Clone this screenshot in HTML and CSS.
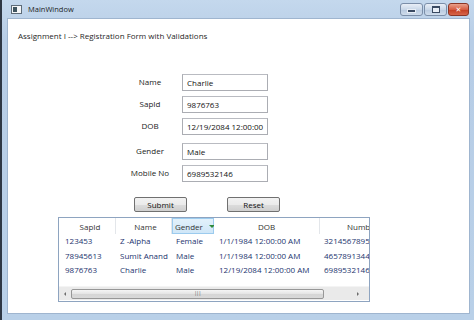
FILE: index.html
```html
<!DOCTYPE html>
<html lang="en">
<head>
    <meta charset="UTF-8">
    <title>MainWindow</title>
    <link rel="stylesheet" href="styles.css">
</head>
<body>
    <div class="window">
        <div class="titlebar">
            <svg class="app-icon" width="11" height="9" viewBox="0 0 11 9">
                <rect x="0.5" y="0.5" width="10" height="8" fill="#f4f6f8" stroke="#5d6b78"/>
                <rect x="2" y="2" width="4" height="5" fill="#3f5560"/>
            </svg>
            <span class="title">MainWindow</span>
            <div class="caption-buttons">
                <div class="cap-btn"><span class="min-glyph"></span></div>
                <div class="cap-btn"><span class="max-glyph"></span></div>
                <div class="cap-btn close"><span class="close-glyph">&#x2715;</span></div>
            </div>
        </div>

        <div class="client">
            <p class="heading">Assignment I --&gt; Registration Form with Validations</p>

            <div class="form">
                <div class="field">
                    <label>Name</label>
                    <div class="textbox">Charlie</div>
                </div>
                <div class="field">
                    <label>SapId</label>
                    <div class="textbox">9876763</div>
                </div>
                <div class="field">
                    <label>DOB</label>
                    <div class="textbox">12/19/2084 12:00:00</div>
                </div>
                <div class="field gap-above">
                    <label>Gender</label>
                    <div class="textbox">Male</div>
                </div>
                <div class="field">
                    <label>Mobile No</label>
                    <div class="textbox">6989532146</div>
                </div>
            </div>

            <div class="actions">
                <button>Submit</button>
                <button>Reset</button>
            </div>

            <div class="grid">
                <div class="grid-head">
                    <div class="hcell c-sap">SapId</div>
                    <div class="hcell c-name">Name</div>
                    <div class="hcell c-gender sorted">Gender <span class="sort-arrow"></span></div>
                    <div class="hcell c-dob">DOB</div>
                    <div class="hcell c-num">Numb</div>
                </div>
                <div class="grid-body">
                    <div class="grid-row">
                        <div class="cell c-sap">123453</div>
                        <div class="cell c-name">Z -Alpha</div>
                        <div class="cell c-gender">Female</div>
                        <div class="cell c-dob">1/1/1984 12:00:00 AM</div>
                        <div class="cell c-num">3214567895</div>
                    </div>
                    <div class="grid-row">
                        <div class="cell c-sap">78945613</div>
                        <div class="cell c-name">Sumit Anand</div>
                        <div class="cell c-gender">Male</div>
                        <div class="cell c-dob">1/1/1984 12:00:00 AM</div>
                        <div class="cell c-num">4657891344</div>
                    </div>
                    <div class="grid-row">
                        <div class="cell c-sap">9876763</div>
                        <div class="cell c-name">Charlie</div>
                        <div class="cell c-gender">Male</div>
                        <div class="cell c-dob">12/19/2084 12:00:00 AM</div>
                        <div class="cell c-num">6989532146</div>
                    </div>
                </div>
                <div class="hscroll">
                    <div class="arrow left"></div>
                    <div class="thumb"><span class="grip">|||</span></div>
                    <div class="arrow right"></div>
                </div>
            </div>
        </div>
    </div>
</body>
</html>
```

FILE: styles.css
```css
body {
    margin: 0;
    background-color: #2e3744;
    font-family: "Open Sans", "Noto Sans", sans-serif;
    font-size: 8px;
    color: #222;
}
.window {
    margin-left: 2px;
    width: 472px;
    height: 320px;
    box-sizing: border-box;
    padding: 0 4px 6px 5px;
    background: linear-gradient(to bottom, #c4d8ed, #b7cde6 40px, #b9d0e8);
    display: flex;
    flex-direction: column;
}
.titlebar {
    height: 18px;
    display: flex;
    align-items: center;
    flex-shrink: 0;
}
.app-icon {
    margin-left: 4px;
    margin-right: 6px;
}
.title {
    font-size: 7.5px;
    color: #1b1f26;
}
.caption-buttons {
    margin-left: auto;
    margin-right: 1px;
    display: flex;
    gap: 1px;
    align-self: flex-start;
    margin-top: 3px;
}
.cap-btn {
    width: 21px;
    height: 11px;
    border: 1px solid #7b8ea8;
    border-radius: 3px;
    background: linear-gradient(to bottom, #e9eff7, #c9d7e8 50%, #b7c9df 51%, #cfdcec);
    display: flex;
    align-items: center;
    justify-content: center;
}
.cap-btn.close {
    width: 19px;
    border-color: #8a3626;
    background: linear-gradient(to bottom, #e9a08b, #d65e43 50%, #c23d22 51%, #d7654a);
}
.min-glyph {
    width: 7px;
    height: 2px;
    background: #3a4a62;
    border: 1px solid #e8eef6;
    margin-top: 3px;
}
.max-glyph {
    width: 6px;
    height: 4px;
    border: 1px solid #3a4a62;
    border-top-width: 2px;
    background: #e8eef6;
}
.close-glyph {
    color: #ffffff;
    font-size: 7px;
    font-weight: bold;
    font-family: "DejaVu Sans", sans-serif;
}
.client {
    flex: 1;
    background: #ffffff;
    border: 1px solid #9fb5cf;
    padding: 0 10px;
    overflow: hidden;
}
.heading {
    margin: 11px 0 0 0;
    line-height: 12px;
    font-size: 8px;
    color: #1f1f1f;
}
.form {
    margin-top: 32px;
    margin-left: 106px;
}
.field {
    display: flex;
    align-items: center;
    height: 17px;
    margin-bottom: 5px;
}
.field.gap-above {
    margin-top: 8px;
}
.field label {
    width: 52px;
    text-align: center;
    margin-right: 6px;
    color: #222;
    margin-top: -2px;
}
.textbox {
    height: 15px;
    border: 1px solid #abadb3;
    border-top-color: #b9bbc1;
    line-height: 15px;
    padding-left: 4px;
    box-sizing: content-box;
    width: 80px;
    color: #111;
    white-space: nowrap;
    overflow: hidden;
}
.actions {
    margin-top: 15px;
    margin-left: 116px;
    display: flex;
    gap: 40px;
}
button {
    width: 53px;
    height: 15px;
    padding: 0;
    font-family: inherit;
    font-size: 8px;
    color: #111;
    border: 1px solid #707070;
    border-radius: 2px;
    background: linear-gradient(to bottom, #f2f2f2, #ebebeb 50%, #dddddd 51%, #cfcfcf);
}
.grid {
    margin-top: 5px;
    margin-left: 40px;
    width: 312px;
    height: 85px;
    box-sizing: border-box;
    border: 1px solid #8ea4c0;
    display: flex;
    flex-direction: column;
    overflow: hidden;
}
.grid-head,
.grid-row {
    display: flex;
    white-space: nowrap;
}
.grid-head {
    height: 16px;
    align-items: stretch;
}
.hcell {
    display: flex;
    align-items: center;
    justify-content: center;
    color: #333;
    border-right: 1px solid #e3e6ea;
    background: #ffffff;
    box-sizing: border-box;
}
.hcell.sorted {
    background: linear-gradient(to bottom, #e3f1fb, #cfe6f7);
    border: 1px solid #9ccbee;
    justify-content: flex-start;
    padding-left: 2px;
}
.hcell.c-num {
    justify-content: flex-start;
    padding-left: 27px;
    border-right: none;
}
.sort-arrow {
    margin-left: 6px;
    width: 0;
    height: 0;
    border-left: 3px solid transparent;
    border-right: 3px solid transparent;
    border-top: 3px solid #2f8a3a;
}
.grid-body {
    flex: 1;
}
.grid-row {
    height: 14.5px;
    line-height: 14.5px;
}
.cell {
    padding-left: 5px;
    box-sizing: border-box;
    color: #23346e;
    overflow: hidden;
}
.c-sap { width: 57px; flex-shrink: 0; padding-left: 6px; }
.c-name { width: 56px; flex-shrink: 0; padding-left: 4px; }
.c-gender { width: 42px; flex-shrink: 0; padding-left: 4px; }
.c-dob { width: 106px; flex-shrink: 0; }
.c-num { width: 50px; flex-shrink: 0; padding-left: 4px; }
.hscroll {
    height: 13px;
    margin-bottom: 1px;
    display: flex;
    align-items: center;
    background: #eaeaea;
    border-top: 1px solid #f4f4f4;
}
.arrow {
    width: 12px;
    height: 100%;
    display: flex;
    align-items: center;
    justify-content: center;
    flex-shrink: 0;
}
.arrow::before {
    content: "";
    border-top: 2px solid transparent;
    border-bottom: 2px solid transparent;
}
.arrow.left::before {
    border-right: 2px solid #6d6d6d;
}
.arrow.right::before {
    border-left: 2px solid #6d6d6d;
}
.thumb {
    width: 253px;
    height: 10px;
    border: 1px solid #979797;
    border-radius: 2px;
    background: linear-gradient(to bottom, #f5f5f5, #e4e4e4 50%, #d5d5d5 51%, #d9d9d9);
    display: flex;
    align-items: center;
    justify-content: center;
    box-sizing: border-box;
}
.grip {
    font-size: 5px;
    letter-spacing: -0.5px;
    color: #555;
    line-height: 5px;
}
.hscroll .arrow.right {
    margin-left: auto;
    width: 22px;
}
```
